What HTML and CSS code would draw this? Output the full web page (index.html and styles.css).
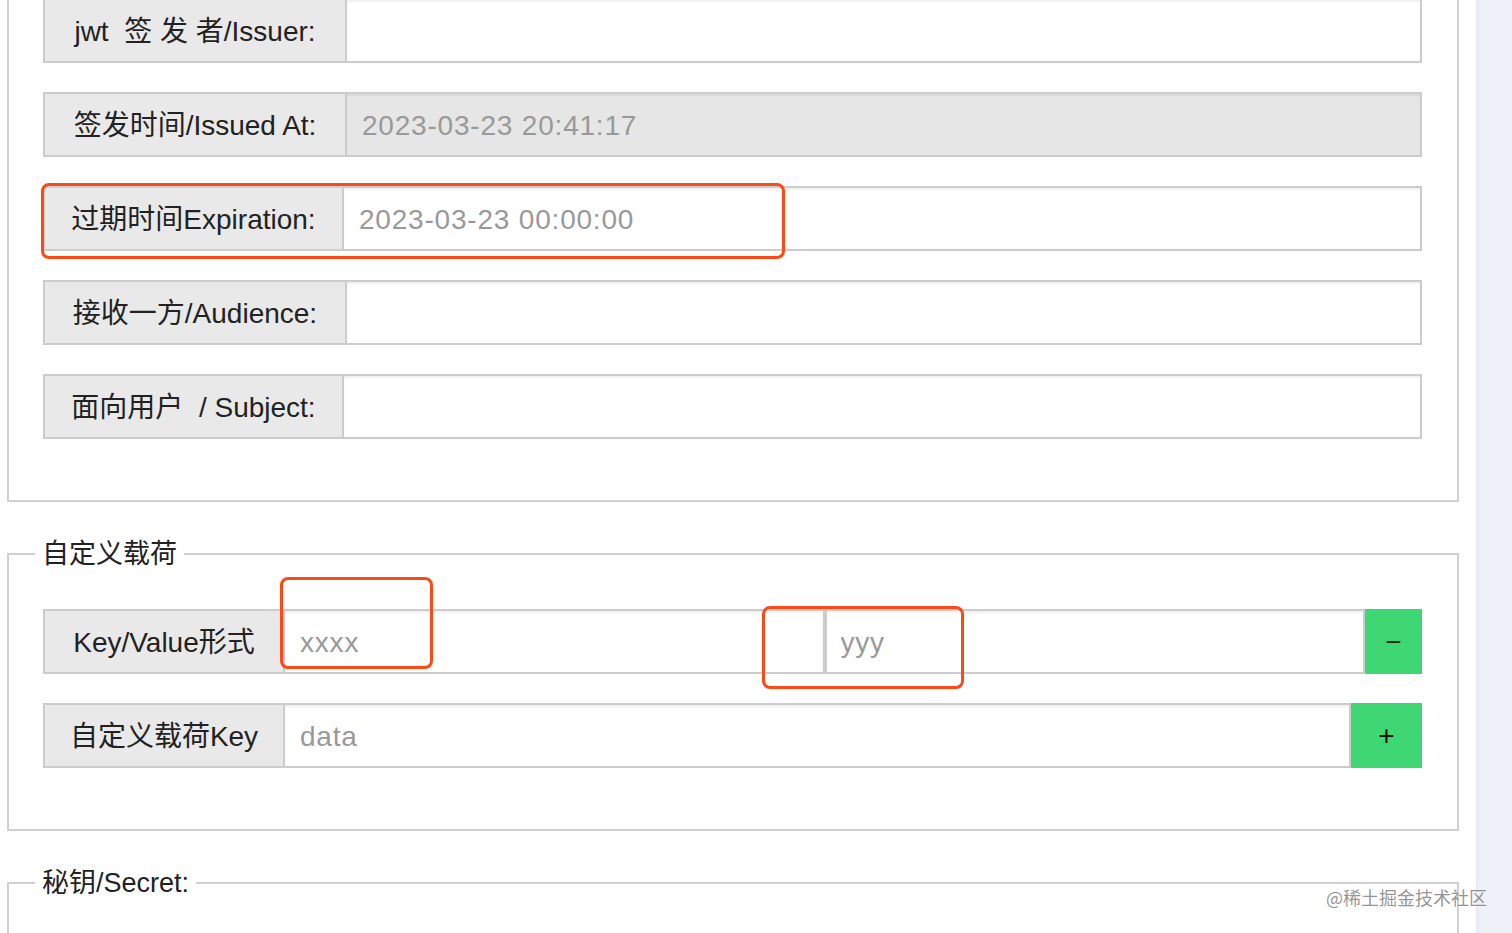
FILE: index.html
```html
<!DOCTYPE html>
<html lang="zh-CN">
<head>
    <meta charset="UTF-8">
    <meta name="viewport" content="width=device-width, initial-scale=1.0">
    <title>JWT 生成</title>
    <link rel="stylesheet" href="styles.css">
</head>
<body>
    <div class="page">
        <main class="main">
            <fieldset class="box first">
                <div class="input-group">
                    <span class="addon w304">jwt&nbsp; 签 发 者/Issuer:</span>
                    <input class="field" type="text">
                </div>
                <div class="input-group">
                    <span class="addon w304">签发时间/Issued At:</span>
                    <input class="field" type="text" value="2023-03-23 20:41:17" disabled>
                </div>
                <div class="input-group">
                    <span class="addon w301">过期时间Expiration:</span>
                    <input class="field" type="text" placeholder="2023-03-23 00:00:00">
                </div>
                <div class="input-group">
                    <span class="addon w304">接收一方/Audience:</span>
                    <input class="field" type="text">
                </div>
                <div class="input-group">
                    <span class="addon w301">面向用户 &nbsp;/ Subject:</span>
                    <input class="field" type="text">
                </div>
            </fieldset>

            <fieldset class="box">
                <legend>自定义载荷</legend>
                <div class="input-group">
                    <span class="addon w242">Key/Value形式</span>
                    <input class="field" type="text" placeholder="xxxx">
                    <input class="field split" type="text" placeholder="yyy">
                    <button class="btn-green minus">−</button>
                </div>
                <div class="input-group">
                    <span class="addon w242">自定义载荷Key</span>
                    <input class="field" type="text" placeholder="data">
                    <button class="btn-green plus">+</button>
                </div>
            </fieldset>

            <fieldset class="box">
                <legend>秘钥/Secret:</legend>
            </fieldset>

            <!-- 标注框 -->
            <div class="mark mark-exp"></div>
            <div class="mark mark-key"></div>
            <div class="mark mark-val"></div>

            <div class="watermark">@稀土掘金技术社区</div>
        </main>
        <aside class="rail"></aside>
    </div>
</body>
</html>
```

FILE: styles.css
```css
html, body {
    margin: 0;
    padding: 0;
    height: 100%;
    overflow: hidden;
    background: #fff;
}
body {
    font-family: "Liberation Sans", "Noto Sans CJK SC", sans-serif;
    color: #222;
}
.page {
    display: flex;
    height: 933px;
    overflow: hidden;
}
.main {
    position: relative;
    flex: 1;
    padding: 0 17px 0 7px;
}
.rail {
    width: 36px;
    flex: none;
    background: linear-gradient(to right, #e6e9f0 0, #eef1f8 4px, #eef1f8 100%);
}
.box {
    margin: 34px 0 0 0;
    padding: 37px 35px 61px 34px;
    border: 2px solid #d0d0d0;
    min-width: 0;
}
.box.first {
    margin-top: -34px;
    padding-top: 30px;
}
.box legend {
    font-size: 27px;
    line-height: 36px;
    padding: 0 7px;
    margin-left: -8px;
    color: #222;
}
.input-group {
    display: flex;
    height: 65px;
    margin-bottom: 29px;
}
.input-group:last-child {
    margin-bottom: 0;
}
.addon {
    flex: none;
    box-sizing: border-box;
    display: flex;
    align-items: center;
    justify-content: center;
    white-space: nowrap;
    padding-bottom: 3px;
    background: #e9e9e9;
    border: 2px solid #ccc;
    font-size: 28px;
    color: #222;
}
.w304 { width: 304px; }
.w301 { width: 301px; }
.w242 { width: 242px; }
.field {
    flex: 1;
    min-width: 0;
    box-sizing: border-box;
    height: 65px;
    margin: 0;
    padding: 2px 15px 0;
    border: 2px solid #ccc;
    border-left: none;
    background: #fff;
    box-shadow: inset 0 2px 2px rgba(0, 0, 0, 0.06);
    font-family: "Liberation Sans", "Noto Sans CJK SC", sans-serif;
    font-size: 28px;
    letter-spacing: 0.8px;
    color: #999;
    outline: none;
}
.field::placeholder {
    color: #999;
}
.field:disabled {
    background: #e6e6e6;
    color: #999;
}
.field.split {
    border-left: 2px solid #ccc;
    padding-left: 14px;
}
.btn-green {
    flex: none;
    height: 65px;
    border: none;
    background: #3ed774;
    color: #111;
    font-family: "Liberation Sans", sans-serif;
    cursor: pointer;
    padding: 0;
}
.btn-green.minus {
    width: 57px;
    font-size: 28px;
    color: #163020;
}
.btn-green.plus {
    width: 71px;
    font-size: 28px;
}
.mark {
    position: absolute;
    box-sizing: border-box;
    border: 3px solid #fc4a17;
    border-radius: 8px;
}
.mark-exp {
    left: 41px;
    top: 183px;
    width: 744px;
    height: 76px;
}
.mark-key {
    left: 280px;
    top: 577px;
    width: 153px;
    height: 92px;
}
.mark-val {
    left: 762px;
    top: 606px;
    width: 202px;
    height: 83px;
}
.watermark {
    position: absolute;
    left: 1326px;
    top: 885px;
    font-family: "Noto Sans CJK SC", sans-serif;
    font-size: 18px;
    line-height: 24px;
    color: rgba(130, 130, 130, 0.85);
    white-space: nowrap;
}
```
